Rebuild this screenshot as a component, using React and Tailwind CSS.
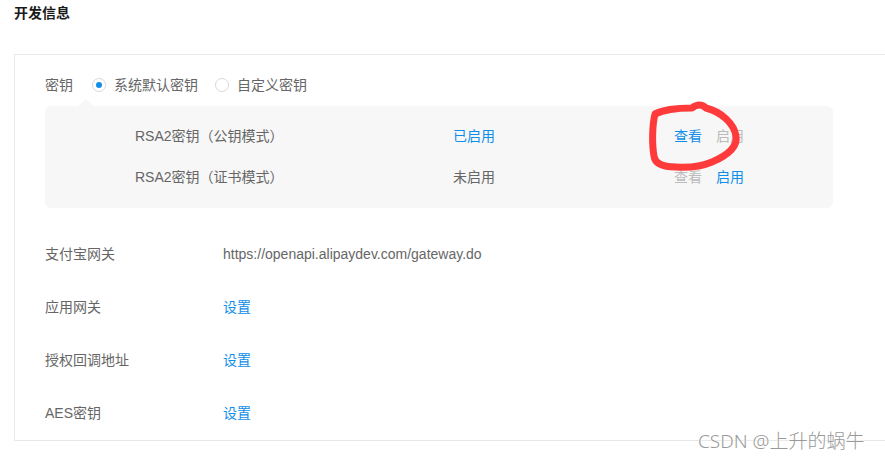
import React from 'react';

const font = { fontFamily: '"Liberation Sans", "Noto Sans CJK SC", sans-serif' };

function Radio({ checked, label }) {
  return (
    <label className="flex items-center">
      <span className="flex h-[14px] w-[14px] items-center justify-center rounded-full border border-[#d9d9d9] bg-white">
        {checked && <span className="h-[6px] w-[6px] rounded-full bg-[#108ee9]" />}
      </span>
      <span className="ml-[8px] text-[14px] text-[#666]">{label}</span>
    </label>
  );
}

const keyRows = [
  { name: 'RSA2密钥（公钥模式）', status: '已启用', on: true },
  { name: 'RSA2密钥（证书模式）', status: '未启用', on: false },
];

const infoRows = [
  { label: '支付宝网关', value: 'https://openapi.alipaydev.com/gateway.do', link: false },
  { label: '应用网关', value: '设置', link: true },
  { label: '授权回调地址', value: '设置', link: true },
  { label: 'AES密钥', value: '设置', link: true },
];

export default function App() {
  return (
    <div className="relative h-[460px] w-[885px] overflow-hidden bg-white leading-[20px]" style={font}>
      {/* Title */}
      <div className="pl-[14px] pt-[3px] text-[14px] font-bold text-[#1a1a1a]">开发信息</div>

      {/* Card */}
      <div className="ml-[14px] mt-[31px] w-[900px] border-b border-l border-t border-[#e8e8e8] pb-[1px]">
        {/* Key type radio row */}
        <div className="flex items-center pl-[30px] pt-[20px]">
          <span className="w-[47px] text-[14px] text-[#666]">密钥</span>
          <div className="flex items-center gap-[17px]">
            <Radio checked label="系统默认密钥" />
            <Radio label="自定义密钥" />
          </div>
        </div>

        {/* Key list box */}
        <div className="relative ml-[30px] mt-[11px] w-[788px] rounded-[6px] bg-[#f7f7f7] pb-[11px] pt-[9px]">
          <span className="absolute -top-[7px] left-[33px] h-0 w-0 border-x-[8px] border-b-[7px] border-x-transparent border-b-[#f7f7f7]" />
          {keyRows.map((r) => (
            <div key={r.name} className="flex h-[41px] items-center text-[14px]">
              <span className="box-content w-[318px] pl-[90px] text-[#666]">{r.name}</span>
              <span className={'w-[221px] ' + (r.on ? 'text-[#108ee9]' : 'text-[#666]')}>{r.status}</span>
              <span className={r.on ? 'text-[#108ee9]' : 'text-[#bbb]'}>查看</span>
              <span className={'ml-[14px] ' + (r.on ? 'text-[#bbb]' : 'text-[#108ee9]')}>启用</span>
            </div>
          ))}
        </div>

        {/* Info rows */}
        <div className="mt-[19px]">
          {infoRows.map((r) => (
            <div key={r.label} className="flex h-[53px] items-center pl-[30px] text-[14px]">
              <span className="w-[178px] text-[#666]">{r.label}</span>
              <span className={r.link ? 'text-[#108ee9]' : 'text-[#666]'}>{r.value}</span>
            </div>
          ))}
        </div>
      </div>

      {/* Red hand-drawn annotation */}
      <svg className="pointer-events-none absolute left-0 top-0" width="885" height="460">
        <path
          d="M655 114 C 665 109, 680 108, 692 108 C 697 104, 702 104, 706 108 C 722 112, 734 124, 736 136 C 738 148, 726 156, 712 162 C 700 167, 690 168, 676 167 C 664 167, 655 164, 654 156 C 652 145, 652 126, 655 114 Z"
          fill="none"
          stroke="#ff3a3a"
          strokeWidth="7"
          strokeLinejoin="round"
        />
      </svg>

      {/* Watermark */}
      <div
        className="absolute left-[698px] top-[429px] text-[19px] leading-[24px] text-[#999]"
        style={{
          fontFamily: '"Noto Sans", "Noto Sans CJK SC", sans-serif',
          fontWeight: 300,
          textShadow: '0 0 2px #fff, 0 0 2px #fff, 0 0 2px #fff',
        }}
      >
        CSDN @上升的蜗牛
      </div>
    </div>
  );
}
